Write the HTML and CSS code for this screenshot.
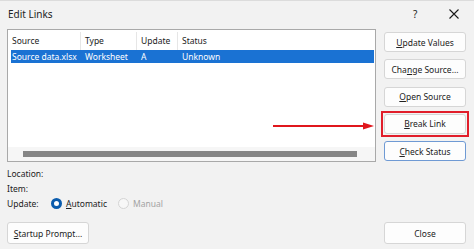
FILE: index.html
```html
<!DOCTYPE html>
<html lang="en">
  <head>
    <meta charset="UTF-8" />
    <title>Edit Links</title>
    <link rel="stylesheet" href="styles.css">
  </head>
  <body>
    <div class="dialog">
      <div class="titlebar">
        <span class="title">Edit Links</span>
        <span class="help">?</span>
        <span class="close-x">
          <svg width="10" height="10" viewBox="0 0 10 10">
            <path d="M0.5 0.5 L9.5 9.5 M9.5 0.5 L0.5 9.5" stroke="#1a1a1a" stroke-width="1.1" fill="none" />
          </svg>
        </span>
      </div>

      <div class="main">
        <div class="left">
          <div class="list">
            <div class="row head">
              <div class="c1">Source</div>
              <div class="c2">Type</div>
              <div class="c3">Update</div>
              <div class="c4">Status</div>
            </div>
            <div class="row selected">
              <div class="c1">Source data.xlsx</div>
              <div class="c2">Worksheet</div>
              <div class="c3">A</div>
              <div class="c4">Unknown</div>
            </div>
            <div class="rows-fill"></div>
            <div class="hscroll"><div class="thumb"></div></div>
          </div>

          <div class="info">
            <div class="line">Location:</div>
            <div class="line">Item:</div>
            <div class="line update">
              <span class="lbl">Update:</span>
              <span class="radio on"></span>
              <span class="opt"><u>A</u>utomatic</span>
              <span class="radio off"></span>
              <span class="opt disabled">Manual</span>
            </div>
          </div>
        </div>

        <div class="buttons">
          <button class="btn"><u>U</u>pdate Values</button>
          <button class="btn">Cha<u>n</u>ge Source...</button>
          <button class="btn"><u>O</u>pen Source</button>
          <div class="mark">
            <button class="btn"><u>B</u>reak Link</button>
          </div>
          <button class="btn focused"><u>C</u>heck Status</button>
        </div>
      </div>

      <div class="footer">
        <button class="btn"><u>S</u>tartup Prompt...</button>
        <button class="btn">Close</button>
      </div>

      <svg class="arrow" width="102" height="10" viewBox="0 0 102 10">
        <line x1="0" y1="5" x2="92" y2="5" stroke="#e0161c" stroke-width="2.2" />
        <path d="M90 1.5 L101 5 L90 8.5 Z" fill="#e0161c" />
      </svg>
    </div>
  </body>
</html>
```

FILE: styles.css
```css
body {
  margin: 0;
  background: #f2f2f2;
  font-family: "Noto Sans", "Open Sans", sans-serif;
  font-size: 8.5px;
  color: #222222;
}

.dialog {
  position: relative;
  width: 474px;
  height: 249px;
  box-sizing: border-box;
  border-top: 1px solid #dcdcdc;
  background: #f2f2f2;
}

.titlebar {
  height: 26px;
  display: flex;
  align-items: center;
  padding-left: 8px;
}
.title {
  flex: 1;
  font-size: 10px;
}
.help {
  font-size: 10px;
  width: 36px;
  text-align: left;
}
.close-x {
  display: flex;
  width: 25px;
}

.main {
  display: flex;
  padding-left: 7px;
  gap: 8px;
  margin-top: 2px;
}
.left {
  width: 369px;
}

.list {
  height: 133px;
  box-sizing: border-box;
  border: 1px solid #a9a9a9;
  background: #ffffff;
  padding: 2px 1px 0 3px;
  display: flex;
  flex-direction: column;
}
.row {
  display: flex;
  height: 13px;
  align-items: center;
  white-space: nowrap;
}
.row.head {
  height: 18px;
}
.row.head div {
  border-right: 1px solid #e6e6e6;
  height: 18px;
  line-height: 18px;
  box-sizing: border-box;
}
.row.head .c4 {
  border-right: none;
}
.row.selected {
  background: #1a72d3;
  color: #ffffff;
}
.c1 { width: 70px; padding-left: 1px; box-sizing: border-box; }
.c2 { width: 56px; padding-left: 4px; box-sizing: border-box; }
.c3 { width: 41px; padding-left: 4px; box-sizing: border-box; }
.c4 { flex: 1; padding-left: 4px; }

.rows-fill {
  flex: 1;
}
.hscroll {
  height: 14px;
  margin-left: -3px;
  margin-right: -1px;
  background: #f6f6f6;
  display: flex;
  align-items: center;
}
.thumb {
  margin-left: 15px;
  width: 334px;
  height: 6px;
  background: #868686;
}

.info {
  margin-top: 4px;
}
.line {
  height: 15px;
  line-height: 15px;
  display: flex;
  align-items: center;
}
.lbl {
  width: 44px;
}
.radio {
  width: 11px;
  height: 11px;
  border-radius: 50%;
  box-sizing: border-box;
  margin-right: 4px;
}
.radio.on {
  background: #ffffff;
  border: 3.5px solid #0b5cad;
}
.radio.off {
  background: #f7f7f7;
  border: 1px solid #d4d4d4;
  margin-left: 11px;
}
.opt.disabled {
  color: #a3a3a3;
}

.buttons {
  display: flex;
  flex-direction: column;
  gap: 7.3px;
  margin-top: 3px;
}
.btn {
  width: 82px;
  height: 20px;
  padding: 0;
  border: 1px solid #d6d6d6;
  border-radius: 3px;
  background: #fdfdfd;
  font-family: inherit;
  font-size: 8.5px;
  color: #222222;
}
.mark {
  margin: -3px;
  padding: 1px;
  border: 2px solid #e11d2a;
}
.mark .btn {
  display: block;
}
.btn.focused {
  border-color: #6f9ad4;
}

.footer {
  display: flex;
  justify-content: space-between;
  padding: 0 8px 0 7px;
  margin-top: 11px;
}
.footer .btn {
  height: 22px;
}

.arrow {
  position: absolute;
  left: 273px;
  top: 120px;
}
```
